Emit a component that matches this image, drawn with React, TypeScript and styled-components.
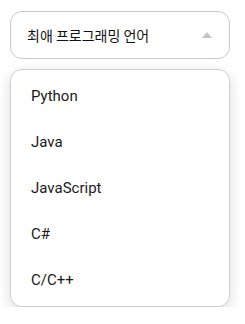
import React from "react";
import styled, { createGlobalStyle } from "styled-components";

const Global = createGlobalStyle`
  html, body { margin: 0; padding: 0; background: #fff; }
  body { font-family: Roboto, "Noto Sans CJK KR", sans-serif; }
`;

const Wrapper = styled.div`
  width: 220px;
  padding: 11px 0 0 10px;
  display: flex;
  flex-direction: column;
  gap: 10px;
`;

const SelectBox = styled.div`
  box-sizing: border-box;
  height: 48px;
  border: 1px solid #c8c8c8;
  border-radius: 12px;
  display: flex;
  align-items: center;
  justify-content: space-between;
  padding: 0 17px 0 16px;
  background: #fff;
`;

const Label = styled.span`
  font-family: "Noto Sans CJK KR", Roboto, sans-serif;
  font-size: 14px;
  color: #111;
`;

const Arrow = styled.svg`
  width: 10px;
  height: 6px;
  display: block;
`;

const List = styled.ul`
  box-sizing: border-box;
  margin: 0;
  padding: 3px 0;
  list-style: none;
  border: 1px solid #cfcfcf;
  border-radius: 12px;
  background: #fff;
  box-shadow: 0 4px 14px rgba(0, 0, 0, 0.14);
`;

const Item = styled.li`
  height: 46px;
  display: flex;
  align-items: center;
  padding-left: 20px;
  font-family: Roboto, sans-serif;
  font-size: 15px;
  color: #1a1a1a;
`;

const items = ["Python", "Java", "JavaScript", "C#", "C/C++"];

export default function App() {
  return (
    <>
      <Global />
      <Wrapper>
        <SelectBox>
          <Label>최애 프로그래밍 언어</Label>
          <Arrow viewBox="0 0 10 6">
            <polygon points="0,6 5,0 10,6" fill="#c4c4c4" />
          </Arrow>
        </SelectBox>
        <List>
          {items.map((it) => (
            <Item key={it}>{it}</Item>
          ))}
        </List>
      </Wrapper>
    </>
  );
}
